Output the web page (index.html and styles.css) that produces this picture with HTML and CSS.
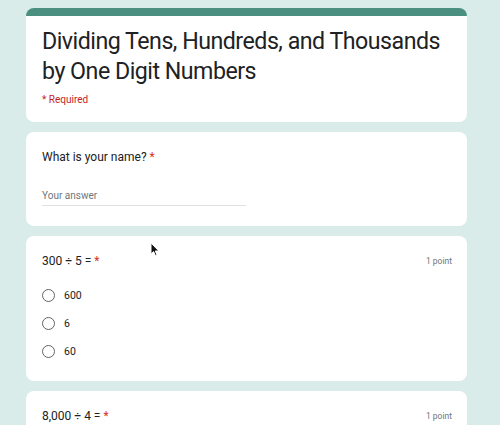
FILE: index.html
```html
<!DOCTYPE html>
<html lang="en">
<head>
    <meta charset="UTF-8">
    <meta name="viewport" content="width=device-width, initial-scale=1.0">
    <title>Dividing Tens, Hundreds, and Thousands by One Digit Numbers</title>
    <link rel="stylesheet" href="styles.css">
</head>
<body>
    <div class="form">
        <div class="card card-header">
            <h1 class="title">Dividing Tens, Hundreds, and Thousands<br>by One Digit Numbers</h1>
            <div class="required-note">* Required</div>
        </div>

        <div class="card">
            <div class="question">What is your name? <span class="star">*</span></div>
            <div class="answer">Your answer</div>
        </div>

        <div class="card card-cursor">
            <div class="question-row">
                <div class="question">300 ÷ 5 = <span class="star">*</span></div>
                <div class="points">1 point</div>
            </div>
            <div class="options">
                <label class="option"><span class="radio"></span>600</label>
                <label class="option"><span class="radio"></span>6</label>
                <label class="option"><span class="radio"></span>60</label>
            </div>
            <svg class="cursor" width="10" height="15" viewBox="0 0 10 15">
                <path d="M1 1 L1 12 L3.6 9.6 L5.4 13.6 L7 12.9 L5.3 9 L8.8 9 Z" fill="#111" stroke="#fff" stroke-width="1"/>
            </svg>
        </div>

        <div class="card">
            <div class="question-row">
                <div class="question">8,000 ÷ 4 = <span class="star">*</span></div>
                <div class="points">1 point</div>
            </div>
            <div class="options">
                <label class="option"><span class="radio"></span>2,000</label>
            </div>
        </div>
    </div>
</body>
</html>
```

FILE: styles.css
```css
body {
    margin: 0;
    background-color: #d9ecea;
    font-family: Roboto, Arial, sans-serif;
    color: #202124;
    overflow: hidden;
}

.form {
    width: 441px;
    margin: 8px 0 0 26px;
    display: flex;
    flex-direction: column;
    gap: 10px;
}

.card {
    background-color: #fff;
    border-radius: 8px;
    padding: 15px 16px 16px;
}

.card-header {
    border-top: 8px solid #4a8f80;
    padding: 10px 16px 17px;
}

.card-cursor {
    position: relative;
}

.title {
    margin: 0;
    font-size: 23.2px;
    font-weight: 400;
    letter-spacing: -0.5px;
    line-height: 30px;
    white-space: nowrap;
}

.required-note {
    margin-top: 8px;
    font-size: 10px;
    color: #c5221f;
}

.question {
    font-size: 12px;
    line-height: 20px;
}

.star {
    color: #d93025;
}

.question-row {
    display: flex;
    justify-content: space-between;
    align-items: center;
}

.points {
    font-size: 8.5px;
    color: #70757a;
    margin-right: -1px;
}

.answer {
    width: 204px;
    margin-top: 20px;
    margin-bottom: 4px;
    font-size: 10px;
    line-height: 18px;
    color: #70757a;
    border-bottom: 1px solid #e0e0e0;
}

.options {
    margin-top: 10px;
    display: flex;
    flex-direction: column;
}

.option {
    display: flex;
    align-items: center;
    height: 28px;
    font-size: 10.5px;
    color: #202124;
}

.radio {
    width: 11px;
    height: 11px;
    border: 1.5px solid #5f6368;
    border-radius: 50%;
    margin-right: 9px;
}

.cursor {
    position: absolute;
    left: 124px;
    top: 6px;
}
```
